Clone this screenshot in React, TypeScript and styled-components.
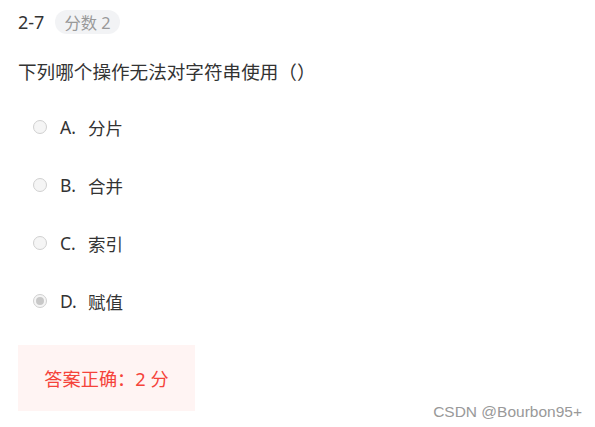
import styled, { createGlobalStyle } from 'styled-components'

const GlobalStyle = createGlobalStyle`
    body {
        margin: 0;
        background: #ffffff;
        font-family: "Noto Sans", "Noto Sans CJK SC", sans-serif;
    }
`

const Page = styled.div`
    position: relative;
    width: 595px;
    height: 427px;
    padding: 10px 18px 0;
    box-sizing: border-box;
    color: #333333;
`

const Header = styled.div`
    display: flex;
    align-items: center;
    gap: 11px;
    height: 24px;
`

const Number = styled.span`
    font-size: 18px;
    color: #333333;
`

const ScoreBadge = styled.span`
    display: inline-flex;
    align-items: center;
    height: 24px;
    padding: 0 9px;
    border-radius: 12px;
    background: #f2f3f5;
    color: #999999;
    font-size: 16.3px;
`

const Question = styled.p`
    margin: 24px 0 0;
    font-size: 18.6px;
    line-height: 28px;
    color: #333333;
`

const Options = styled.div`
    display: flex;
    flex-direction: column;
    gap: 30px;
    margin-top: 27px;
    padding-left: 15px;
`

const Option = styled.label`
    display: flex;
    align-items: center;
    height: 28px;
    font-size: 17.5px;
    color: #333333;
`

const Radio = styled.span<{ $checked?: boolean }>`
    width: 12px;
    height: 12px;
    border-radius: 50%;
    border: 1px solid #d0d0d0;
    background: #f5f5f5;
    margin-right: 13px;
    display: flex;
    align-items: center;
    justify-content: center;

    &::after {
        content: '';
        display: ${p => (p.$checked ? 'block' : 'none')};
        width: 8px;
        height: 8px;
        border-radius: 50%;
        background: #c8c8c8;
    }
`

const Letter = styled.span`
    width: 28px;
`

const Result = styled.div`
    margin-top: 30px;
    width: 177px;
    height: 66px;
    background: #fff4f3;
    color: #f5433a;
    font-size: 18.2px;
    display: flex;
    align-items: center;
    justify-content: center;
`

const Watermark = styled.span`
    position: absolute;
    right: 13px;
    bottom: 6px;
    font-family: "Liberation Sans", Arial, sans-serif;
    font-size: 15.5px;
    color: #999999;
`

const options = [
    { letter: 'A.', text: '分片' },
    { letter: 'B.', text: '合并' },
    { letter: 'C.', text: '索引' },
    { letter: 'D.', text: '赋值', checked: true },
]

const App = () => {
    return (
        <>
            <GlobalStyle />
            <Page>
                <Header>
                    <Number>2-7</Number>
                    <ScoreBadge>分数 2</ScoreBadge>
                </Header>
                <Question>下列哪个操作无法对字符串使用（）</Question>
                <Options>
                    {options.map(option => (
                        <Option key={option.letter}>
                            <Radio $checked={option.checked} />
                            <Letter>{option.letter}</Letter>
                            <span>{option.text}</span>
                        </Option>
                    ))}
                </Options>
                <Result>答案正确：2 分</Result>
                <Watermark>CSDN @Bourbon95+</Watermark>
            </Page>
        </>
    )
}

export default App
